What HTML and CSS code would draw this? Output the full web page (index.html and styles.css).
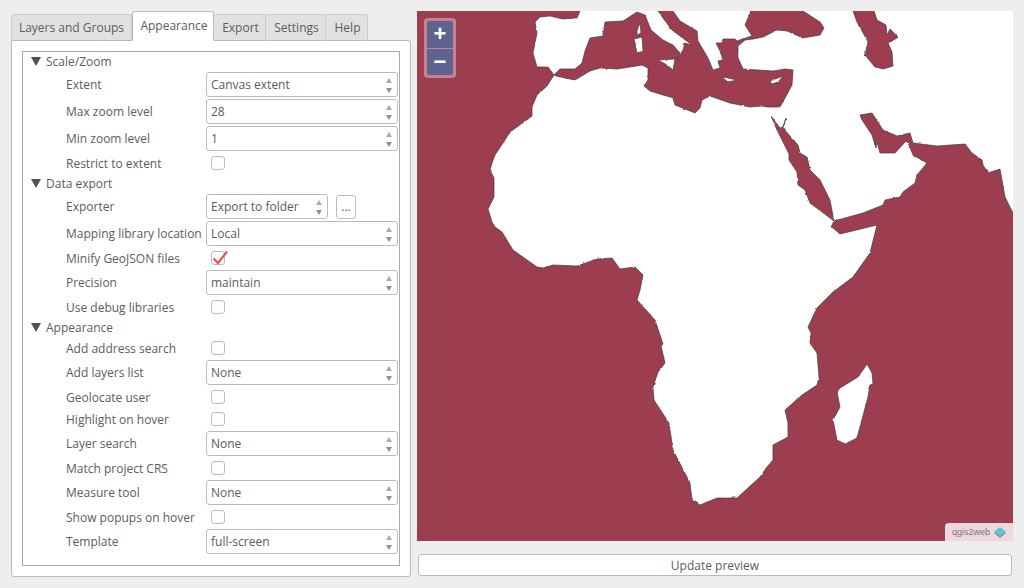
FILE: index.html
```html
<!DOCTYPE html>
<html lang="en">
<head>
<meta charset="utf-8">
<title>qgis2web</title>
<link rel="stylesheet" href="styles.css">
</head>
<body>
<div class="app">
  <section class="side">
    <nav class="tabs">
      <div class="tab t1">Layers and Groups</div>
      <div class="tab active t2">Appearance</div>
      <div class="tab t3">Export</div>
      <div class="tab t4">Settings</div>
      <div class="tab t5">Help</div>
    </nav>
    <div class="panel">
      <div class="tree">
        <div class="section"><i class="tri"></i>Scale/Zoom</div>
        <div class="row combo-row"><label>Extent</label><div class="combo">Canvas extent<span class="spin"></span></div></div>
        <div class="row combo-row"><label>Max zoom level</label><div class="combo">28<span class="spin"></span></div></div>
        <div class="row combo-row"><label>Min zoom level</label><div class="combo">1<span class="spin"></span></div></div>
        <div class="row check-row"><label>Restrict to extent</label><span class="check"></span></div>
        <div class="section"><i class="tri"></i>Data export</div>
        <div class="row combo-row"><label>Exporter</label><div class="combo short">Export to folder<span class="spin"></span></div><div class="dots">...</div></div>
        <div class="row combo-row"><label>Mapping library location</label><div class="combo">Local<span class="spin"></span></div></div>
        <div class="row check-row"><label>Minify GeoJSON files</label><span class="check"><svg class="tick" width="18" height="16" viewBox="0 0 18 16"><path d="M2.500 8.500 L7 13 L16 1.500" fill="none" stroke="#e8504f" stroke-width="2.200"/></svg></span></div>
        <div class="row combo-row"><label>Precision</label><div class="combo">maintain<span class="spin"></span></div></div>
        <div class="row check-row"><label>Use debug libraries</label><span class="check"></span></div>
        <div class="section"><i class="tri"></i>Appearance</div>
        <div class="row check-row"><label>Add address search</label><span class="check"></span></div>
        <div class="row combo-row"><label>Add layers list</label><div class="combo">None<span class="spin"></span></div></div>
        <div class="row check-row"><label>Geolocate user</label><span class="check"></span></div>
        <div class="row check-row"><label>Highlight on hover</label><span class="check"></span></div>
        <div class="row combo-row"><label>Layer search</label><div class="combo">None<span class="spin"></span></div></div>
        <div class="row check-row"><label>Match project CRS</label><span class="check"></span></div>
        <div class="row combo-row"><label>Measure tool</label><div class="combo">None<span class="spin"></span></div></div>
        <div class="row check-row"><label>Show popups on hover</label><span class="check"></span></div>
        <div class="row combo-row"><label>Template</label><div class="combo">full-screen<span class="spin"></span></div></div>
      </div>
    </div>
  </section>
  <section class="preview">
    <div class="map">
      <svg class="world" width="596" height="530" viewBox="417 11 596 530">
        <defs>
          <filter id="rough" filterUnits="userSpaceOnUse" x="410" y="4" width="610" height="544" color-interpolation-filters="sRGB">
            <feTurbulence type="fractalNoise" baseFrequency="0.22" numOctaves="2" seed="4"/>
            <feDisplacementMap in="SourceGraphic" scale="2" xChannelSelector="R" yChannelSelector="G"/>
          </filter>
        </defs>
        <g filter="url(#rough)">
        <path class="sea" d="M405,0 L580,0 L580,11 577,18 563,19 550,16 540,17 535,22 537,33 533,53 537,67 548,67 554,75 547,86 537,95 532,107 532,116 517,127 510,132 503,143 495,155 492,163 490,170 494,178 494,197 488,209 492,222 495,227 502,232 513,250 537,267 543,268 553,265 577,266 597,259 612,258 620,269 635,267 643,275 640,290 637,300 655,320 663,344 661,346 665,363 658,372 653,387 654,400 669,423 673,450 690,483 692,500 700,505 717,498 737,498 760,477 767,467 773,460 773,445 788,437 788,423 785,410 802,395 817,385 819,377 817,353 810,343 811,333 808,327 817,308 833,292 853,277 870,253 877,225 840,234 833,228 831,227 834,221 810,203 805,190 798,185 797,172 789,160 789,154 777,130 771,116 780,128 783,127 786,118 783,128 798,145 800,153 807,157 810,170 820,180 830,200 834,221 863,213 883,205 885,200 900,197 903,192 915,183 917,175 927,163 913,155 907,140 895,153 880,153 877,142 876,148 872,135 862,120 860,115 872,113 883,130 897,136 910,133 913,143 937,146 965,144 972,153 982,160 983,165 988,173 1000,169 1005,197 1013,213 1025,226 1025,552 405,552 Z"/>
        <path class="sea" d="M554,75 L560,69 575,69 582,63 585,51 590,38 603,36 605,22 623,21 637,12 645,15 651,30 663,40 673,45 680,53 677,60 683,50 685,43 692,45 680,36 672,30 663,18 658,11 656,0 674,0 673,11 680,21 697,31 698,41 708,58 713,70 720,68 718,61 723,60 720,51 716,43 722,43 723,39 735,39 737,41 745,38 752,36 745,25 751,11 751,0 802,0 803,11 820,22 824,28 820,35 803,38 787,31 777,30 763,37 753,39 745,40 738,46 738,58 743,69 758,70 773,71 785,69 793,70 792,85 785,98 780,107 767,107 762,106 750,107 730,103 710,96 702,100 700,108 695,113 675,105 673,98 650,91 644,86 648,80 648,68 642,65 630,67 617,69 600,68 590,71 575,80 560,77 Z"/>
        <path class="sea" d="M853,0 L853,11 857,22 868,42 865,55 875,67 883,69 893,66 892,52 888,43 897,38 898,37 890,29 887,35 886,25 877,20 874,11 874,0 Z"/>
        <path class="land" d="M637,30 640,23 641,33 637,35 Z"/>
        <path class="land" d="M634,39 642,37 643,51 637,53 Z"/>
        <path class="land" d="M658,60 675,59 673,70 667,65 Z"/>
        <path class="land" d="M722,77 728,78 737,80 728,82 Z"/>
        <path class="land" d="M770,81 783,76 778,82 772,84 Z"/>
        <path class="land" d="M867,364 872,373 873,384 870,385 868,397 857,438 845,444 837,440 833,420 840,407 837,392 840,388 858,377 863,370 Z"/>
        </g>
      </svg>
      <div class="zoom">
        <div class="zoom-btn">+</div>
        <div class="zoom-btn">−</div>
      </div>
      <div class="attrib">qgis2web<svg class="logo" width="14" height="13" viewBox="0 0 14 13"><path d="M1 7 L7 12 L13 7 L7 3 Z" fill="#8b8f96"/><path d="M1 5.500 L7 1 L13 5.500 L7 10 Z" fill="#5ac8d8"/></svg></div>
    </div>
    <button class="update">Update preview</button>
  </section>
</div>
</body>
</html>
```
FILE: styles.css
```css
* { box-sizing: border-box; }
html, body { margin: 0; height: 100%; }
body {
  background: #eeeeee;
  font-family: "Open Sans", "Noto Sans", sans-serif;
  font-size: 12px;
  color: #5c5c5c;
  overflow: hidden;
}
.app { display: flex; padding: 11px 0 0 11px; gap: 6px; }
.side { width: 400px; display: flex; flex-direction: column; }
.tabs { display: flex; height: 30px; align-items: flex-end; position: relative; z-index: 1; }
.tab {
  height: 27px;
  display: flex;
  align-items: center;
  justify-content: center;
  padding-left: 2px;
  background: #e1e1e1;
  border: 1px solid #cccccc;
  border-bottom: 1px solid #bbbbbb;
  border-left-width: 0;
  border-radius: 3px 3px 0 0;
}
.t1 { width: 121px; border-left-width: 1px; padding-left: 0; }
.t2 { width: 82px; }
.t3 { width: 52px; }
.t4 { width: 60px; }
.t5 { width: 42px; }
.tab.active {
  height: 30px;
  background: #ffffff;
  border: 1px solid #bbbbbb;
  border-bottom-color: #ffffff;
  padding-bottom: 2px;
}
.panel {
  height: 537px;
  margin-top: -1px;
  background: #ffffff;
  border: 1px solid #bbbbbb;
  border-radius: 0 3px 3px 3px;
  padding: 10px;
}
.tree {
  height: 515px;
  border: 1px solid #aaaaaa;
  padding: 1px 0 0 0;
  display: flex;
  flex-direction: column;
  gap: 2px;
}
.section { height: 17px; line-height: 17px; display: flex; align-items: center; padding-left: 8px; }
.tri {
  width: 0;
  height: 0;
  margin-right: 5px;
  border-left: 5px solid transparent;
  border-right: 5px solid transparent;
  border-top: 9px solid #505050;
}
.row { display: flex; align-items: center; padding-left: 43px; }
.row label { width: 140px; white-space: nowrap; flex: none; }
.combo-row { height: 25px; }
.check-row { height: 20px; }
.combo {
  width: 192px;
  height: 25px;
  display: flex;
  align-items: center;
  padding-left: 4px;
  background: #ffffff;
  border: 1px solid #bbbbbb;
  border-radius: 3px;
  position: relative;
}
.combo.short { width: 122px; }
.spin {
  position: absolute;
  right: 5px;
  top: 5px;
  width: 6px;
  height: 15px;
  display: flex;
  flex-direction: column;
  justify-content: space-between;
}
.spin::before, .spin::after {
  content: "";
  width: 0;
  height: 0;
  border-left: 3px solid transparent;
  border-right: 3px solid transparent;
}
.spin::before { border-bottom: 5px solid #aaaaaa; }
.spin::after { border-top: 5px solid #909090; }
.dots {
  width: 20px;
  height: 24px;
  margin-left: 8px;
  border: 1px solid #bbbbbb;
  border-radius: 3px;
  display: flex;
  align-items: center;
  justify-content: center;
  background: #ffffff;
}
.check {
  width: 14px;
  height: 14px;
  margin-left: 5px;
  border: 1px solid #bbbbbb;
  border-radius: 3px;
  position: relative;
  background: #ffffff;
}
.tick { position: absolute; left: -1px; top: -2px; }
.preview { width: 596px; display: flex; flex-direction: column; }
.map { width: 596px; height: 530px; position: relative; background: #ffffff; overflow: hidden; }
.world { display: block; }
.sea { fill: #9c3d50; stroke: #3c3c40; stroke-width: 0.7; stroke-linejoin: round; }
.land { fill: #ffffff; stroke: #3c3c40; stroke-width: 0.7; stroke-linejoin: round; }
.zoom {
  position: absolute;
  left: 7px;
  top: 7px;
  width: 32px;
  height: 60px;
  padding: 3px;
  border-radius: 4px;
  background: #c4848f;
  display: flex;
  flex-direction: column;
  gap: 1px;
}
.zoom-btn {
  flex: 1;
  background: #5f6390;
  color: #ffffff;
  font-family: "Liberation Sans", sans-serif;
  font-weight: 700;
  font-size: 22px;
  line-height: 25px;
  text-align: center;
}
.zoom-btn:first-child { border-radius: 2px 2px 0 0; }
.zoom-btn:last-child { border-radius: 0 0 2px 2px; }
.attrib {
  position: absolute;
  right: 0;
  bottom: 0;
  width: 68px;
  height: 18px;
  padding-left: 7px;
  display: flex;
  align-items: center;
  gap: 3px;
  background: #eed8de;
  border-radius: 4px 0 0 0;
  color: #777777;
  font-family: "Liberation Sans", sans-serif;
  font-size: 9px;
}
.update {
  width: 594px;
  height: 22px;
  margin: 13px 0 0 1px;
  background: #ffffff;
  border: 1px solid #bbbbbb;
  border-radius: 3px;
  color: #5c5c5c;
  font-family: "Open Sans", "Noto Sans", sans-serif;
  font-size: 12px;
  padding: 0;
}
```
